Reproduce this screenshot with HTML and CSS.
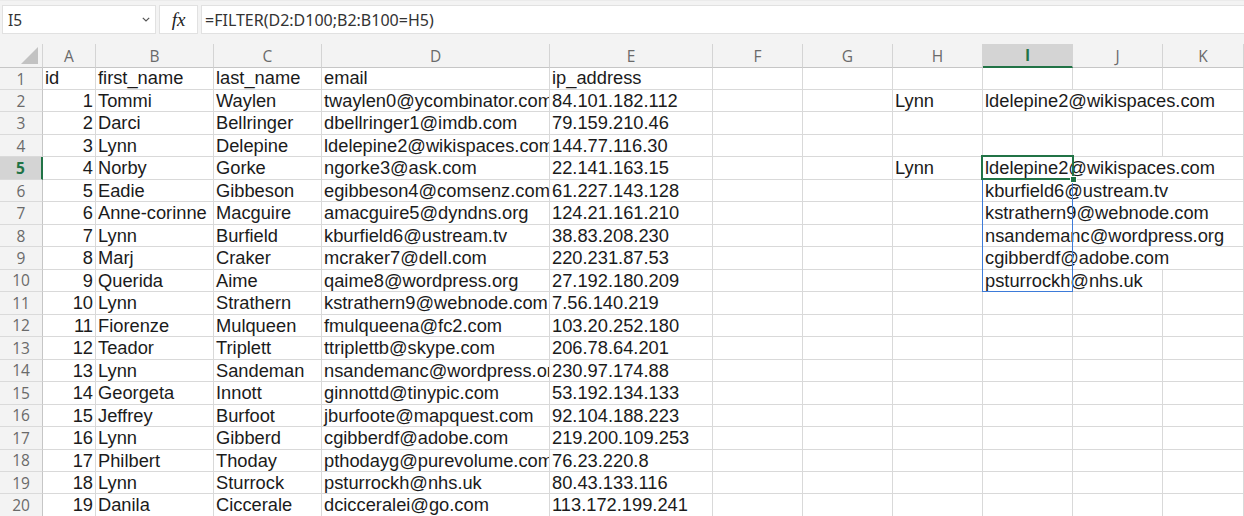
FILE: index.html
```html
<!DOCTYPE html>
<html lang="en">
    <head>
        <meta charset="utf-8" />
        <title>FILTER - Excel</title>

        <link rel="stylesheet" href="styles.css">
    </head>

    <body>
        <header class="barre-formule">
            <div class="zone-nom">
                <span>I5</span>
                <svg class="chevron" width="8" height="5" viewBox="0 0 8 5"><polyline points="0.8,0.8 4,4 7.2,0.8" fill="none" stroke="#555" stroke-width="1.2"/></svg>
            </div>
            <div class="bouton-fx">fx</div>
            <div class="saisie-formule">=FILTER(D2:D100;B2:B100=H5)</div>
        </header>

        <main class="feuille">
            <!-- Entêtes de colonnes -->
            <div class="ligne">
                <div class="coin"><span class="triangle"></span></div>
                <div class="entete-col">A</div>
                <div class="entete-col">B</div>
                <div class="entete-col">C</div>
                <div class="entete-col">D</div>
                <div class="entete-col">E</div>
                <div class="entete-col">F</div>
                <div class="entete-col">G</div>
                <div class="entete-col">H</div>
                <div class="entete-col choisie">I</div>
                <div class="entete-col">J</div>
                <div class="entete-col">K</div>
            </div>

            <div class="ligne premiere">
                <div class="entete-ligne">1</div>
                <div class="cellule">id</div>
                <div class="cellule">first_name</div>
                <div class="cellule">last_name</div>
                <div class="cellule">email</div>
                <div class="cellule">ip_address</div>
                <div class="cellule"></div><div class="cellule"></div><div class="cellule"></div>
                <div class="cellule"></div><div class="cellule"></div><div class="cellule"></div>
            </div>

            <div class="ligne">
                <div class="entete-ligne">2</div>
                <div class="cellule nombre">1</div>
                <div class="cellule">Tommi</div>
                <div class="cellule">Waylen</div>
                <div class="cellule">twaylen0@ycombinator.com</div>
                <div class="cellule">84.101.182.112</div>
                <div class="cellule"></div><div class="cellule"></div>
                <div class="cellule">Lynn</div>
                <div class="cellule deborde-3">ldelepine2@wikispaces.com</div>
            </div>

            <div class="ligne">
                <div class="entete-ligne">3</div>
                <div class="cellule nombre">2</div>
                <div class="cellule">Darci</div>
                <div class="cellule">Bellringer</div>
                <div class="cellule">dbellringer1@imdb.com</div>
                <div class="cellule">79.159.210.46</div>
                <div class="cellule"></div><div class="cellule"></div><div class="cellule"></div>
                <div class="cellule"></div><div class="cellule"></div><div class="cellule"></div>
            </div>

            <div class="ligne">
                <div class="entete-ligne">4</div>
                <div class="cellule nombre">3</div>
                <div class="cellule">Lynn</div>
                <div class="cellule">Delepine</div>
                <div class="cellule">ldelepine2@wikispaces.com</div>
                <div class="cellule">144.77.116.30</div>
                <div class="cellule"></div><div class="cellule"></div><div class="cellule"></div>
                <div class="cellule"></div><div class="cellule"></div><div class="cellule"></div>
            </div>

            <div class="ligne">
                <div class="entete-ligne choisie">5</div>
                <div class="cellule nombre">4</div>
                <div class="cellule">Norby</div>
                <div class="cellule">Gorke</div>
                <div class="cellule">ngorke3@ask.com</div>
                <div class="cellule">22.141.163.15</div>
                <div class="cellule"></div><div class="cellule"></div>
                <div class="cellule">Lynn</div>
                <div class="cellule deborde-3 active">
                    ldelepine2@wikispaces.com
                    <span class="plage-propagee"></span>
                    <span class="cadre-actif"><span class="poignee"></span></span>
                </div>
            </div>

            <div class="ligne">
                <div class="entete-ligne">6</div>
                <div class="cellule nombre">5</div>
                <div class="cellule">Eadie</div>
                <div class="cellule">Gibbeson</div>
                <div class="cellule">egibbeson4@comsenz.com</div>
                <div class="cellule">61.227.143.128</div>
                <div class="cellule"></div><div class="cellule"></div><div class="cellule"></div>
                <div class="cellule deborde-3">kburfield6@ustream.tv</div>
            </div>

            <div class="ligne">
                <div class="entete-ligne">7</div>
                <div class="cellule nombre">6</div>
                <div class="cellule">Anne-corinne</div>
                <div class="cellule">Macguire</div>
                <div class="cellule">amacguire5@dyndns.org</div>
                <div class="cellule">124.21.161.210</div>
                <div class="cellule"></div><div class="cellule"></div><div class="cellule"></div>
                <div class="cellule deborde-3">kstrathern9@webnode.com</div>
            </div>

            <div class="ligne">
                <div class="entete-ligne">8</div>
                <div class="cellule nombre">7</div>
                <div class="cellule">Lynn</div>
                <div class="cellule">Burfield</div>
                <div class="cellule">kburfield6@ustream.tv</div>
                <div class="cellule">38.83.208.230</div>
                <div class="cellule"></div><div class="cellule"></div><div class="cellule"></div>
                <div class="cellule deborde-3">nsandemanc@wordpress.org</div>
            </div>

            <div class="ligne">
                <div class="entete-ligne">9</div>
                <div class="cellule nombre">8</div>
                <div class="cellule">Marj</div>
                <div class="cellule">Craker</div>
                <div class="cellule">mcraker7@dell.com</div>
                <div class="cellule">220.231.87.53</div>
                <div class="cellule"></div><div class="cellule"></div><div class="cellule"></div>
                <div class="cellule deborde-3">cgibberdf@adobe.com</div>
            </div>

            <div class="ligne">
                <div class="entete-ligne">10</div>
                <div class="cellule nombre">9</div>
                <div class="cellule">Querida</div>
                <div class="cellule">Aime</div>
                <div class="cellule">qaime8@wordpress.org</div>
                <div class="cellule">27.192.180.209</div>
                <div class="cellule"></div><div class="cellule"></div><div class="cellule"></div>
                <div class="cellule deborde-2">psturrockh@nhs.uk</div>
                <div class="cellule"></div>
            </div>

            <div class="ligne">
                <div class="entete-ligne">11</div>
                <div class="cellule nombre">10</div>
                <div class="cellule">Lynn</div>
                <div class="cellule">Strathern</div>
                <div class="cellule">kstrathern9@webnode.com</div>
                <div class="cellule">7.56.140.219</div>
                <div class="cellule"></div><div class="cellule"></div><div class="cellule"></div>
                <div class="cellule"></div><div class="cellule"></div><div class="cellule"></div>
            </div>

            <div class="ligne">
                <div class="entete-ligne">12</div>
                <div class="cellule nombre">11</div>
                <div class="cellule">Fiorenze</div>
                <div class="cellule">Mulqueen</div>
                <div class="cellule">fmulqueena@fc2.com</div>
                <div class="cellule">103.20.252.180</div>
                <div class="cellule"></div><div class="cellule"></div><div class="cellule"></div>
                <div class="cellule"></div><div class="cellule"></div><div class="cellule"></div>
            </div>

            <div class="ligne">
                <div class="entete-ligne">13</div>
                <div class="cellule nombre">12</div>
                <div class="cellule">Teador</div>
                <div class="cellule">Triplett</div>
                <div class="cellule">ttriplettb@skype.com</div>
                <div class="cellule">206.78.64.201</div>
                <div class="cellule"></div><div class="cellule"></div><div class="cellule"></div>
                <div class="cellule"></div><div class="cellule"></div><div class="cellule"></div>
            </div>

            <div class="ligne">
                <div class="entete-ligne">14</div>
                <div class="cellule nombre">13</div>
                <div class="cellule">Lynn</div>
                <div class="cellule">Sandeman</div>
                <div class="cellule">nsandemanc@wordpress.org</div>
                <div class="cellule">230.97.174.88</div>
                <div class="cellule"></div><div class="cellule"></div><div class="cellule"></div>
                <div class="cellule"></div><div class="cellule"></div><div class="cellule"></div>
            </div>

            <div class="ligne">
                <div class="entete-ligne">15</div>
                <div class="cellule nombre">14</div>
                <div class="cellule">Georgeta</div>
                <div class="cellule">Innott</div>
                <div class="cellule">ginnottd@tinypic.com</div>
                <div class="cellule">53.192.134.133</div>
                <div class="cellule"></div><div class="cellule"></div><div class="cellule"></div>
                <div class="cellule"></div><div class="cellule"></div><div class="cellule"></div>
            </div>

            <div class="ligne">
                <div class="entete-ligne">16</div>
                <div class="cellule nombre">15</div>
                <div class="cellule">Jeffrey</div>
                <div class="cellule">Burfoot</div>
                <div class="cellule">jburfoote@mapquest.com</div>
                <div class="cellule">92.104.188.223</div>
                <div class="cellule"></div><div class="cellule"></div><div class="cellule"></div>
                <div class="cellule"></div><div class="cellule"></div><div class="cellule"></div>
            </div>

            <div class="ligne">
                <div class="entete-ligne">17</div>
                <div class="cellule nombre">16</div>
                <div class="cellule">Lynn</div>
                <div class="cellule">Gibberd</div>
                <div class="cellule">cgibberdf@adobe.com</div>
                <div class="cellule">219.200.109.253</div>
                <div class="cellule"></div><div class="cellule"></div><div class="cellule"></div>
                <div class="cellule"></div><div class="cellule"></div><div class="cellule"></div>
            </div>

            <div class="ligne">
                <div class="entete-ligne">18</div>
                <div class="cellule nombre">17</div>
                <div class="cellule">Philbert</div>
                <div class="cellule">Thoday</div>
                <div class="cellule">pthodayg@purevolume.com</div>
                <div class="cellule">76.23.220.8</div>
                <div class="cellule"></div><div class="cellule"></div><div class="cellule"></div>
                <div class="cellule"></div><div class="cellule"></div><div class="cellule"></div>
            </div>

            <div class="ligne">
                <div class="entete-ligne">19</div>
                <div class="cellule nombre">18</div>
                <div class="cellule">Lynn</div>
                <div class="cellule">Sturrock</div>
                <div class="cellule">psturrockh@nhs.uk</div>
                <div class="cellule">80.43.133.116</div>
                <div class="cellule"></div><div class="cellule"></div><div class="cellule"></div>
                <div class="cellule"></div><div class="cellule"></div><div class="cellule"></div>
            </div>

            <div class="ligne">
                <div class="entete-ligne">20</div>
                <div class="cellule nombre">19</div>
                <div class="cellule">Danila</div>
                <div class="cellule">Ciccerale</div>
                <div class="cellule">dcicceralei@go.com</div>
                <div class="cellule">113.172.199.241</div>
                <div class="cellule"></div><div class="cellule"></div><div class="cellule"></div>
                <div class="cellule"></div><div class="cellule"></div><div class="cellule"></div>
            </div>
        </main>
    </body>
</html>
```

FILE: styles.css
```css
    /* Normalisation
=============================================== */
    * {
        margin: 0;
        padding: 0;
        box-sizing: border-box;
    }

    html,
    body {
        width: 100%;
        height: 100%;
        overflow: hidden;
    }

    body {
        background-color: #fff;
        font-family: "Liberation Sans", Arial, sans-serif;
        color: #1b1b1b;
    }

    /* Barre de formule
=============================================== */
    .barre-formule {
        height: 44px;
        padding: 4px 0 10px 2px;
        background-color: #f3f3f3;
        border-top: 1px solid #ebebeb;

        display: flex;
        gap: 3px;
        font-family: "Noto Sans", sans-serif;
        color: #333;
    }

    .zone-nom,
    .bouton-fx,
    .saisie-formule {
        background-color: #fff;
        border: 1px solid #e1e1e1;
        display: flex;
        align-items: center;
    }

    .zone-nom {
        width: 154px;
        padding: 0 5px 0 5px;
        font-size: 15.5px;
        justify-content: space-between;
    }

    .bouton-fx {
        width: 39px;
        justify-content: center;
        font-family: "Liberation Serif", serif;
        font-style: italic;
        font-size: 19px;
        color: #222;
    }

    .saisie-formule {
        flex: 1 1 0;
        padding-left: 3px;
        font-size: 16px;
        border-right: none;
    }

    /* Feuille de calcul
=============================================== */
    .feuille {
        display: grid;
        grid-template-columns: 43px 53px 118px 108px 228px 163px repeat(5, 90px) 1fr;
        /*Entête puis ligne 1 un peu plus basse que les autres*/
        grid-template-rows: 24px 22px;
        grid-auto-rows: 22.47px;
    }

    /*Les lignes ne servent qu'à regrouper les cellules dans le HTML*/
    .ligne {
        display: contents;
    }

    /* Entêtes */
    .coin,
    .entete-col,
    .entete-ligne {
        background-color: #f3f3f3;
        font-family: "Open Sans", sans-serif;
        font-size: 15.5px;
        color: #6a6a6a;

        display: flex;
        align-items: center;
        justify-content: center;
    }

    .coin,
    .entete-col {
        border-right: 1px solid #d4d4d4;
        border-bottom: 1px solid #c6c6c6;
    }

    .coin {
        align-items: flex-end;
        justify-content: flex-end;
        padding: 0 4px 3px 0;
    }

    .triangle {
        width: 17px;
        height: 17px;
        background-color: #c2c2c2;
        clip-path: polygon(100% 0, 100% 100%, 0 100%);
    }

    .entete-ligne {
        border-right: 1px solid #c6c6c6;
        border-bottom: 1px solid #dadada;
    }

    /*Colonne et ligne de la cellule active*/
    .entete-col.choisie {
        background-color: #d4d4d4;
        border-bottom: 2px solid #217346;
        color: #217346;
        font-weight: bold;
    }

    .entete-ligne.choisie {
        background-color: #d4d4d4;
        border-right: 2px solid #217346;
        color: #217346;
        font-weight: bold;
    }

    /* Cellules */
    .cellule {
        border-right: 1px solid #d9d9d9;
        border-bottom: 1px solid #d9d9d9;
        padding: 0 2px;

        font-size: 18.3px;
        line-height: 21px;
        white-space: nowrap;
        overflow: hidden;
    }

    .premiere .cellule {
        line-height: 19px;
    }

    .nombre {
        text-align: right;
    }

    /*Texte qui déborde sur les cellules vides de droite*/
    .deborde-2 {
        grid-column: span 2;
    }

    .deborde-3 {
        grid-column: span 3;
    }

    /* Cellule active et plage de propagation
=============================================== */
    .active {
        position: relative;
        overflow: visible;
    }

    .plage-propagee {
        position: absolute;
        left: -1px;
        top: -1px;
        width: 91px;
        height: calc(6 * 22.47px + 1px);
        border: 1px solid #3d7bd9;
        z-index: 2;
    }

    .cadre-actif {
        position: absolute;
        left: -2px;
        top: -2px;
        width: 93px;
        height: 25px;
        border: 2px solid #217346;
        z-index: 3;
    }

    .poignee {
        position: absolute;
        right: -5px;
        bottom: -5px;
        width: 7px;
        height: 7px;
        background-color: #217346;
        border: 1px solid #fff;
    }
```
